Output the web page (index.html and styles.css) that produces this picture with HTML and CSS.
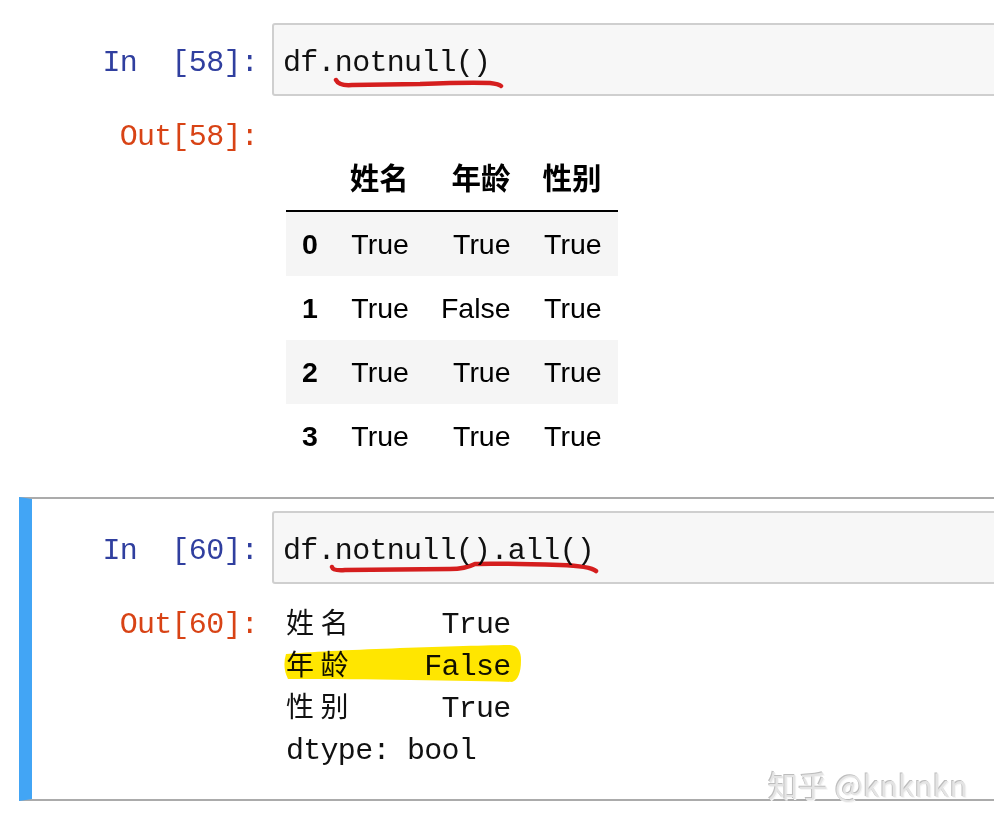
FILE: index.html
```html
<!DOCTYPE html>
<html lang="zh">
<head>
<meta charset="utf-8">
<title>notnull</title>
<link rel="stylesheet" href="styles.css">
</head>
<body>
<div class="notebook">
  <div class="cell">
    <div class="input">
      <div class="prompt in-prompt">In  [58]:</div>
      <div class="code">df.notnull()</div>
    </div>
    <div class="output">
      <div class="prompt out-prompt">Out[58]:</div>
      <div class="output-sub">
        <table class="df">
          <thead>
            <tr><th></th><th><span class="hcjk">姓名</span></th><th><span class="hcjk">年龄</span></th><th><span class="hcjk">性别</span></th></tr>
          </thead>
          <tbody>
            <tr><th>0</th><td>True</td><td>True</td><td>True</td></tr>
            <tr><th>1</th><td>True</td><td>False</td><td>True</td></tr>
            <tr><th>2</th><td>True</td><td>True</td><td>True</td></tr>
            <tr><th>3</th><td>True</td><td>True</td><td>True</td></tr>
          </tbody>
        </table>
      </div>
    </div>
  </div>
  <div class="cell selected">
    <div class="input">
      <div class="prompt in-prompt">In  [60]:</div>
      <div class="code">df.notnull().all()</div>
    </div>
    <div class="output">
      <div class="prompt out-prompt">Out[60]:</div>
      <div class="output-sub">
        <div class="series">
          <div class="row"><span class="cjk">姓名</span><span class="val">     True</span></div>
          <div class="row"><span class="cjk">年龄</span><span class="val">    False</span></div>
          <div class="row"><span class="cjk">性别</span><span class="val">     True</span></div>
          <div class="row"><span class="val">dtype: bool</span></div>
        </div>
      </div>
    </div>
  </div>
</div>
<svg class="marks" width="994" height="824" viewBox="0 0 994 824" aria-hidden="true">
  <path d="M286,654 C330,650 450,646 510,645 Q521,646 521,660 Q521,679 512,682 C450,680 340,679 288,679 Q282,667 286,654 Z" fill="#ffe600"/>
  <path d="M336,80 Q339,86 352,85 L420,84 Q470,82 490,83 Q499,84 501,86" fill="none" stroke="#dc1f1f" stroke-width="4.5" stroke-linecap="round" stroke-linejoin="round"/>
  <path d="M332,567 Q333,571 345,570 L450,569 Q465,569 475,564 Q490,563 560,565 Q590,566 596,571" fill="none" stroke="#dc1f1f" stroke-width="4.5" stroke-linecap="round" stroke-linejoin="round"/>
</svg>
<div class="watermark">知乎 @knknkn</div>
</body>
</html>
```

FILE: styles.css
```css
html, body {
  margin: 0;
  padding: 0;
  overflow: hidden;
  background: #ffffff;
}

body {
  width: 994px;
  height: 824px;
  position: relative;
}

.notebook {
  padding: 9px 0 0 19px;
  width: 1100px;
}

.cell {
  border: 2px solid transparent;
  border-left: 13px solid transparent;
  padding: 12px 0 27px 0;
}

.cell.selected {
  border-color: #ababab;
  border-left-color: #42a5f5;
}

.input {
  display: flex;
  align-items: flex-start;
}

.prompt {
  flex: none;
  width: 240px;
  box-sizing: border-box;
  padding-right: 14px;
  text-align: right;
  white-space: pre;
  font-family: "Liberation Mono", monospace;
  font-size: 30px;
  line-height: 34px;
  letter-spacing: -0.72px;
}

.in-prompt {
  color: #303f9f;
  padding-top: 23px;
}

.out-prompt {
  color: #d84315;
  line-height: 42px;
}

.code {
  flex: 1;
  background: #f7f7f7;
  border: 2px solid #cfcfcf;
  border-radius: 3px;
  padding: 21px 9px 14px;
  font-family: "Liberation Mono", monospace;
  font-size: 30px;
  line-height: 34px;
  letter-spacing: -0.72px;
  white-space: pre;
  color: #111111;
}

.output {
  display: flex;
  align-items: flex-start;
  margin-top: 20px;
}

.output-sub {
  flex: 1;
  padding-left: 14px;
}

.df {
  border-collapse: separate;
  border-spacing: 0;
  margin-top: 31px;
  font-family: "Liberation Sans", "Noto Sans CJK SC", sans-serif;
  font-size: 28.5px;
  line-height: 32px;
  color: #000000;
}

.df th,
.df td {
  padding: 16px;
  height: 32px;
  box-sizing: content-box;
  text-align: right;
  vertical-align: middle;
}

.df thead th {
  font-weight: bold;
  height: 31px;
  padding-bottom: 15px;
  border-bottom: 2px solid #000000;
}

.hcjk {
  font-family: "Noto Sans CJK SC", sans-serif;
  font-size: 29.5px;
  line-height: 24px;
}

.df tbody th {
  font-weight: bold;
}

.df tbody tr:nth-child(odd) {
  background: #f5f5f5;
}

.series {
  display: flex;
  flex-direction: column;
  color: #111111;
}

.row {
  display: flex;
  align-items: baseline;
  height: 42px;
  line-height: 42px;
  white-space: pre;
}

.val {
  font-family: "Liberation Mono", monospace;
  font-size: 30px;
  line-height: 42px;
  letter-spacing: -0.72px;
}

.cjk {
  flex: none;
  width: 69.12px;
  font-family: "Noto Sans CJK SC", sans-serif;
  font-size: 28px;
  line-height: 30px;
  letter-spacing: 6.5px;
}

.marks {
  position: absolute;
  left: 0;
  top: 0;
  mix-blend-mode: multiply;
  pointer-events: none;
}

.watermark {
  position: absolute;
  left: 768px;
  top: 769px;
  font-family: "Noto Sans CJK SC", sans-serif;
  font-size: 30px;
  line-height: 30px;
  color: #e4e4e4;
  text-shadow: -1px -1px 0 #bdbdbd, 1px 1px 0 #f6f6f6;
  white-space: pre;
}
```
